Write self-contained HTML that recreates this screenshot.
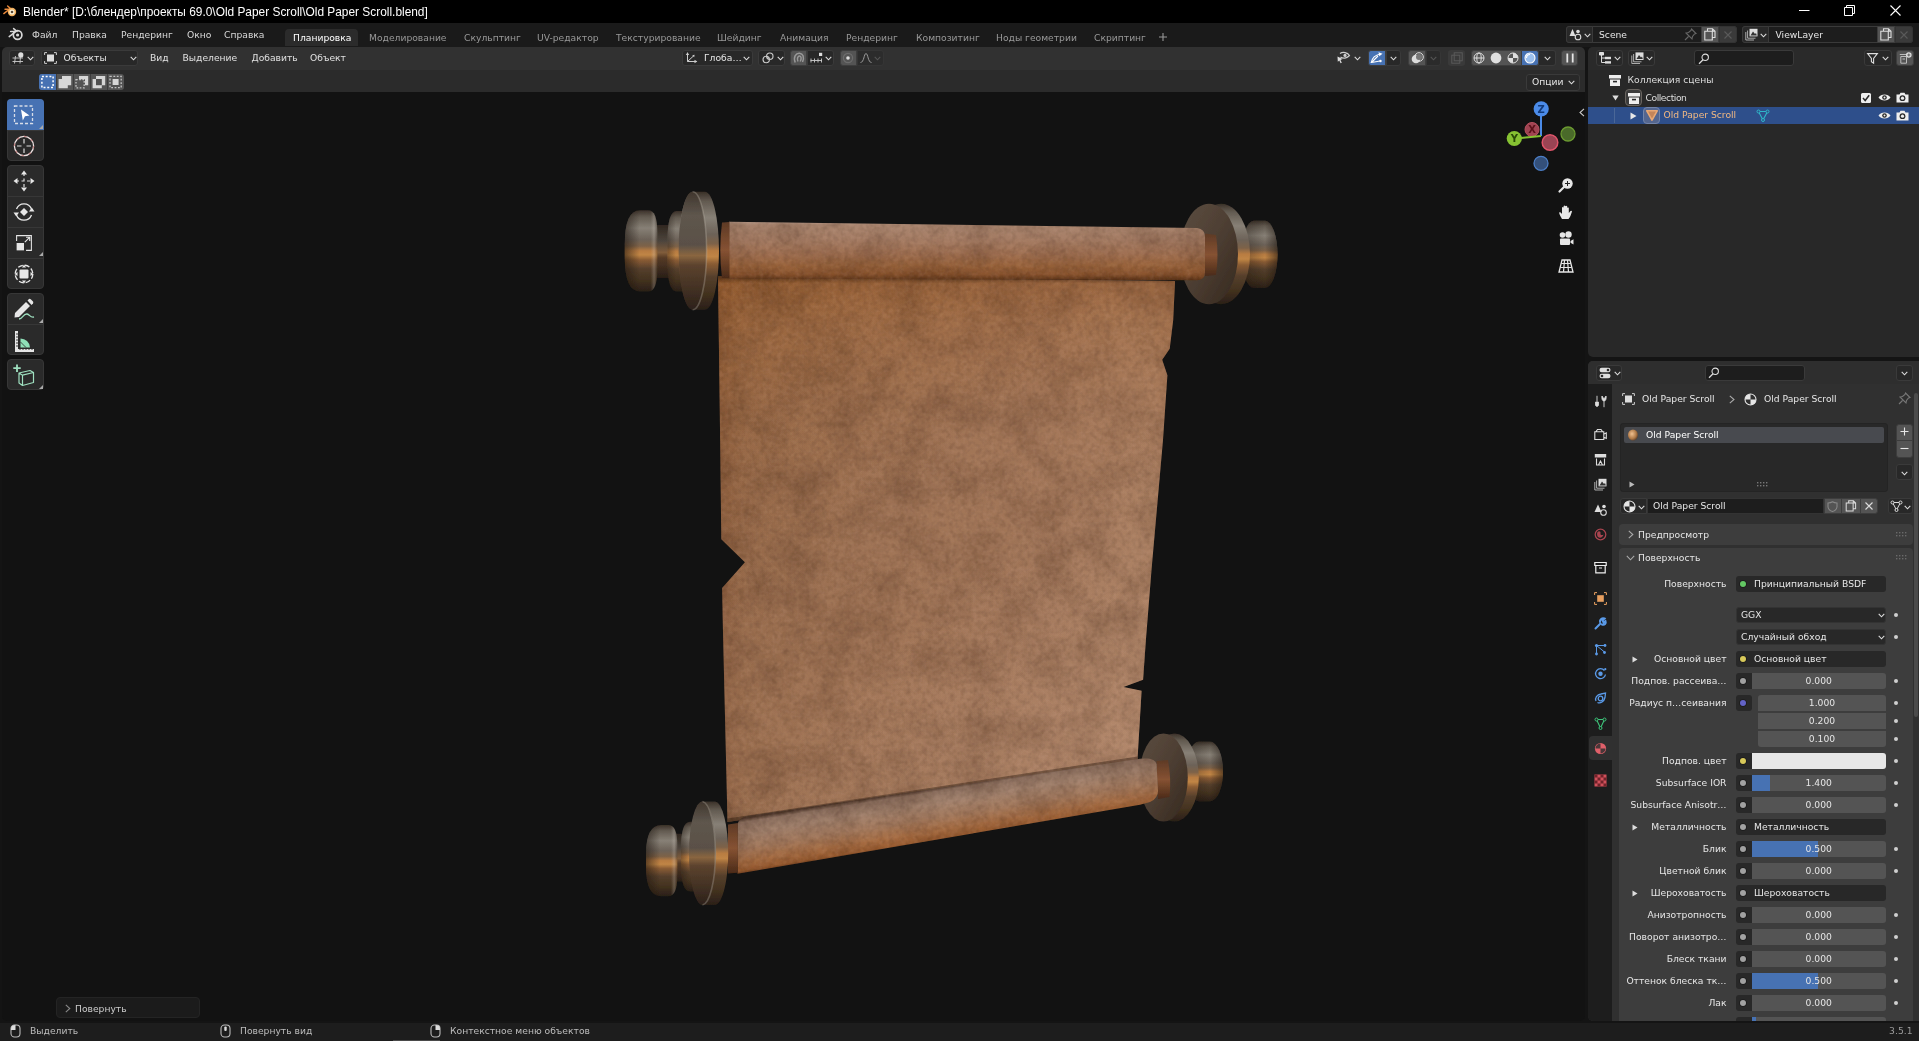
<!DOCTYPE html>
<html lang="ru">
<head>
<meta charset="utf-8">
<title>Blender</title>
<style>
html,body{margin:0;padding:0;width:1919px;height:1041px;overflow:hidden;background:#141414;}
body{font-family:"DejaVu Sans","Liberation Sans",sans-serif;font-size:9.2px;color:#e0e0e0;position:relative;line-height:1;}
.a{position:absolute;}
.t{position:absolute;white-space:nowrap;line-height:12px;height:12px;}
#titlebar,#topbar,#view3d,#outliner,#props,#status{will-change:transform;}
#titlebar{left:0;top:0;width:1919px;height:23px;background:#000;}
#titlebar .tt{left:23px;top:5px;font-family:"Liberation Sans","DejaVu Sans",sans-serif;font-size:11.9px;color:#fff;line-height:15px;height:15px;}
#topbar{left:0;top:23px;width:1919px;height:24px;background:#1a1a1a;}
#topbar .m{color:#d8d8d8;top:5.5px;}
#topbar .w{color:#989898;top:9px;}
#view3d{left:2px;top:47px;width:1583px;height:974px;background:#121212;border-radius:5px;overflow:hidden;}
#vhead{left:0;top:0;width:1583px;height:24px;background:#313131;}
#vtool{left:0;top:24px;width:1583px;height:22px;background:#2b2b2b;}
#outliner{left:1588px;top:47px;width:1331px;height:310px;background:#282828;border-radius:5px 0 0 5px;overflow:hidden;}
#props{left:1588px;top:361px;width:331px;height:660px;background:#303030;border-radius:5px 0 0 5px;overflow:hidden;}
#status{left:0;top:1023px;width:1919px;height:17.5px;background:#1d1d1d;}

.b{position:absolute;height:16px;box-sizing:border-box;border-radius:3px;}
.dk{background:#282828;border:1px solid #3a3a3a;}
.lt{background:#545454;border:1px solid #3d3d3d;}
.bl{background:#4772b3;border:1px solid #3d3d3d;}
.ch{position:absolute;width:6px;height:4px;}
svg{display:block;overflow:visible}
</style>
</head>
<body>
<div id="titlebar" class="a">
  <svg class="a" style="left:3px;top:5px" width="14" height="12" viewBox="0 0 14 12"><g fill="none" stroke="#e8883a" stroke-width="1.4" stroke-linecap="round" stroke-linejoin="round"><path d="M0.8 8.6L6.4 4.2M2 4.2H6.4M4.6 1L7.6 3.6"/></g><circle cx="9" cy="7" r="4.2" fill="#f0b060"/><circle cx="9" cy="7" r="2.6" fill="#fff5d8"/><circle cx="9" cy="7" r="1.3" fill="#5a4a3a"/></svg>
  <svg class="a" style="left:1799px;top:10px" width="11" height="2" viewBox="0 0 11 2"><path d="M0 0.5H10.5" stroke="#fff" stroke-width="1"/></svg>
  <svg class="a" style="left:1844px;top:5px" width="11" height="11" viewBox="0 0 11 11"><path d="M0.5 2.5H8.5V10.5H0.5ZM2.5 2.5V0.5H10.5V8.5H8.5" fill="none" stroke="#fff" stroke-width="1"/></svg>
  <svg class="a" style="left:1890px;top:5px" width="11" height="11" viewBox="0 0 11 11"><path d="M0.5 0.5L10.5 10.5M10.5 0.5L0.5 10.5" fill="none" stroke="#fff" stroke-width="1.1"/></svg>
  <div class="t tt">Blender* [D:\блендер\проекты 69.0\Old Paper Scroll\Old Paper Scroll.blend]</div>
</div>
<div id="topbar" class="a">
  <svg class="a" style="left:8px;top:4px" width="16" height="14" viewBox="0 0 16 14"><g fill="none" stroke="#d8d8d8" stroke-width="1.5" stroke-linecap="round" stroke-linejoin="round"><path d="M1.2 9.6 L7.6 4.6 M2.6 4.6 H7.6 M5.6 1.6 L9 4.4"/><circle cx="9.6" cy="8" r="4.3" stroke-width="1.7"/></g><circle cx="9.6" cy="8" r="1.6" fill="#d8d8d8"/></svg>
  <div class="t m" style="left:32px">Файл</div>
  <div class="t m" style="left:72px">Правка</div>
  <div class="t m" style="left:121px">Рендеринг</div>
  <div class="t m" style="left:187px">Окно</div>
  <div class="t m" style="left:224px">Справка</div>
  <div class="a" style="left:285px;top:6px;width:73px;height:17px;background:#2b2b2b;border-radius:4px 4px 0 0"></div>
  <div class="t w" style="left:293px;color:#fff">Планировка</div>
  <div class="t w" style="left:369px">Моделирование</div>
  <div class="t w" style="left:464px">Скульптинг</div>
  <div class="t w" style="left:537px">UV-редактор</div>
  <div class="t w" style="left:616px">Текстурирование</div>
  <div class="t w" style="left:717px">Шейдинг</div>
  <div class="t w" style="left:780px">Анимация</div>
  <div class="t w" style="left:846px">Рендеринг</div>
  <div class="t w" style="left:916px">Композитинг</div>
  <div class="t w" style="left:996px">Ноды геометрии</div>
  <div class="t w" style="left:1094px">Скриптинг</div>
  <svg class="a" style="left:1158px;top:9px" width="10" height="10" viewBox="0 0 10 10"><path d="M5 1V9M1 5H9" stroke="#989898" stroke-width="1.1" fill="none"/></svg>
  <div class="b dk" style="left:1566px;top:3px;width:171px;height:17px;background:#1d1d1d"></div>
  <div class="a" style="left:1566px;top:3px;width:27px;height:17px;background:#282828;border:1px solid #3a3a3a;box-sizing:border-box;border-radius:3px 0 0 3px"></div>
  <svg class="a" style="left:1569px;top:5px" width="13" height="13" viewBox="0 0 13 13"><path d="M3.5 1L6.5 8H0.5Z" fill="#ddd"/><circle cx="9" cy="3.5" r="1.8" fill="#ddd"/><circle cx="9" cy="9" r="2.8" fill="none" stroke="#ddd" stroke-width="1.1"/></svg>
  <svg class="a" style="left:1584px;top:10px" width="7" height="5" viewBox="0 0 7 5"><path d="M0.7 0.8L3.5 3.8L6.3 0.8" fill="none" stroke="#ddd" stroke-width="1.1"/></svg>
  <div class="t" style="left:1599px;top:5.5px;color:#e6e6e6">Scene</div>
  <svg class="a" style="left:1684px;top:5px" width="13" height="13" viewBox="0 0 13 13"><path d="M7.5 1L12 5.5L10.5 6L8.5 8.5L8 11L2 5L4.5 4.5L7 2.5ZM4.5 8.5L1 12" fill="none" stroke="#666" stroke-width="1.1"/></svg>
  <div class="a" style="left:1701px;top:3px;width:18px;height:17px;background:#545454;border:1px solid #3d3d3d;box-sizing:border-box"></div>
  <svg class="a" style="left:1704px;top:5px" width="12" height="13" viewBox="0 0 12 13"><path d="M3.5 3V0.8H8.5L11 3.3V9.5H8.5M8.5 0.8V3.3H11M0.8 3.2H8.3V12H0.8Z" fill="none" stroke="#ddd" stroke-width="1.1"/></svg>
  <div class="a" style="left:1719px;top:3px;width:18px;height:17px;background:#3a3a3a;border:1px solid #333;box-sizing:border-box;border-radius:0 3px 3px 0"></div>
  <svg class="a" style="left:1724px;top:8px" width="8" height="8" viewBox="0 0 8 8"><path d="M0.5 0.5L7.5 7.5M7.5 0.5L0.5 7.5" stroke="#5a5a5a" stroke-width="1.1"/></svg>
  <div class="b dk" style="left:1742px;top:3px;width:171px;height:17px;background:#1d1d1d"></div>
  <div class="a" style="left:1742px;top:3px;width:27px;height:17px;background:#282828;border:1px solid #3a3a3a;box-sizing:border-box;border-radius:3px 0 0 3px"></div>
  <svg class="a" style="left:1745px;top:5px" width="13" height="13" viewBox="0 0 13 13"><path d="M0.8 4V12H9M2.6 2.5V10.2H10.5" fill="none" stroke="#bbb" stroke-width="0.9"/><rect x="4.5" y="0.8" width="8" height="7.6" fill="#ddd"/><path d="M5.5 7.5L8 3.5L10 6L11 5L11.8 7.5Z" fill="#333"/></svg>
  <svg class="a" style="left:1760px;top:10px" width="7" height="5" viewBox="0 0 7 5"><path d="M0.7 0.8L3.5 3.8L6.3 0.8" fill="none" stroke="#ddd" stroke-width="1.1"/></svg>
  <div class="t" style="left:1775.5px;top:5.5px;color:#e6e6e6">ViewLayer</div>
  <div class="a" style="left:1877px;top:3px;width:18px;height:17px;background:#545454;border:1px solid #3d3d3d;box-sizing:border-box"></div>
  <svg class="a" style="left:1880px;top:5px" width="12" height="13" viewBox="0 0 12 13"><path d="M3.5 3V0.8H8.5L11 3.3V9.5H8.5M8.5 0.8V3.3H11M0.8 3.2H8.3V12H0.8Z" fill="none" stroke="#ddd" stroke-width="1.1"/></svg>
  <div class="a" style="left:1895px;top:3px;width:18px;height:17px;background:#3a3a3a;border:1px solid #333;box-sizing:border-box;border-radius:0 3px 3px 0"></div>
  <svg class="a" style="left:1900px;top:8px" width="8" height="8" viewBox="0 0 8 8"><path d="M0.5 0.5L7.5 7.5M7.5 0.5L0.5 7.5" stroke="#5a5a5a" stroke-width="1.1"/></svg>
</div>
<div id="view3d" class="a"><div class="a" style="left:0;top:-1px;width:1583px;height:976px">
<!--SCROLL-->
<svg class="a" style="left:-2px;top:-46px" width="1919" height="1041" viewBox="0 0 1919 1041">
<defs>
  <linearGradient id="gPaper" gradientUnits="userSpaceOnUse" x1="718" y1="0" x2="1175" y2="0">
    <stop offset="0" stop-color="#8a5d3f"/><stop offset="0.06" stop-color="#976b4c"/><stop offset="0.3" stop-color="#9e7254"/><stop offset="0.7" stop-color="#a3775a"/><stop offset="0.95" stop-color="#aa7e60"/><stop offset="1" stop-color="#a07457"/>
  </linearGradient>
  <linearGradient id="gPaperV" gradientUnits="userSpaceOnUse" x1="0" y1="277" x2="0" y2="830">
    <stop offset="0" stop-color="#2a1608" stop-opacity="0.75"/><stop offset="0.012" stop-color="#8a4a18" stop-opacity="0.4"/><stop offset="0.08" stop-color="#a05a20" stop-opacity="0.22"/><stop offset="0.25" stop-color="#a06030" stop-opacity="0.06"/><stop offset="0.5" stop-color="#b08060" stop-opacity="0"/><stop offset="0.8" stop-color="#c89878" stop-opacity="0.14"/><stop offset="0.95" stop-color="#c09070" stop-opacity="0.1"/><stop offset="1" stop-color="#302010" stop-opacity="0.3"/>
  </linearGradient>
  <linearGradient id="gPaperD" gradientUnits="userSpaceOnUse" x1="720" y1="280" x2="1150" y2="760">
    <stop offset="0" stop-color="#a05a18" stop-opacity="0.16"/><stop offset="0.45" stop-color="#a05a18" stop-opacity="0"/><stop offset="0.6" stop-color="#d8c0b4" stop-opacity="0"/><stop offset="1" stop-color="#d8c0b4" stop-opacity="0.12"/>
  </linearGradient>
  <linearGradient id="gRollT" gradientUnits="userSpaceOnUse" x1="0" y1="222" x2="0" y2="280">
    <stop offset="0" stop-color="#b89a88"/><stop offset="0.05" stop-color="#aa8670"/><stop offset="0.3" stop-color="#a57c64"/><stop offset="0.55" stop-color="#a07052"/><stop offset="0.75" stop-color="#9a643c"/><stop offset="0.9" stop-color="#8a542e"/><stop offset="1" stop-color="#5e351a"/>
  </linearGradient>
  <linearGradient id="gRollB" gradientUnits="userSpaceOnUse" x1="940" y1="787" x2="948.5" y2="840">
    <stop offset="0" stop-color="#4a3428"/><stop offset="0.07" stop-color="#8a6e5e"/><stop offset="0.28" stop-color="#a3836f"/><stop offset="0.55" stop-color="#a47a5e"/><stop offset="0.8" stop-color="#a66c42"/><stop offset="0.95" stop-color="#9a5c30"/><stop offset="1" stop-color="#7a4522"/>
  </linearGradient>
  <linearGradient id="gMetal" x1="0" y1="0" x2="0" y2="1">
    <stop offset="0" stop-color="#3a3028"/><stop offset="0.08" stop-color="#625a50"/><stop offset="0.22" stop-color="#878076"/><stop offset="0.36" stop-color="#6c6258"/><stop offset="0.44" stop-color="#7d6248"/><stop offset="0.5" stop-color="#b87c42"/><stop offset="0.55" stop-color="#c08545"/><stop offset="0.61" stop-color="#8a5c34"/><stop offset="0.72" stop-color="#553f2c"/><stop offset="0.86" stop-color="#43321f"/><stop offset="1" stop-color="#2a1f18"/>
  </linearGradient>
  <linearGradient id="gMetalD" x1="0" y1="0" x2="0" y2="1">
    <stop offset="0" stop-color="#30271f"/><stop offset="0.3" stop-color="#4c443c"/><stop offset="0.52" stop-color="#805c3a"/><stop offset="0.62" stop-color="#553a26"/><stop offset="1" stop-color="#281e17"/>
  </linearGradient>
  <linearGradient id="gFace" x1="0" y1="0" x2="1" y2="1">
    <stop offset="0" stop-color="#5a4c40"/><stop offset="0.45" stop-color="#4f4034"/><stop offset="1" stop-color="#35281f"/>
  </linearGradient>
  <linearGradient id="gWood" x1="0" y1="0" x2="0" y2="1">
    <stop offset="0" stop-color="#5e3a26"/><stop offset="0.5" stop-color="#865232"/><stop offset="1" stop-color="#4a2a18"/>
  </linearGradient>
  <linearGradient id="gEdgeL" x1="0" y1="0" x2="1" y2="0">
    <stop offset="0" stop-color="#1a120c" stop-opacity="0.55"/><stop offset="0.45" stop-color="#1a120c" stop-opacity="0"/><stop offset="0.8" stop-color="#d0c8c0" stop-opacity="0"/><stop offset="0.9" stop-color="#d0c8c0" stop-opacity="0.25"/><stop offset="1" stop-color="#1a120c" stop-opacity="0.3"/>
  </linearGradient>
  <linearGradient id="gEdgeR" x1="1" y1="0" x2="0" y2="0">
    <stop offset="0" stop-color="#1a120c" stop-opacity="0.55"/><stop offset="0.35" stop-color="#1a120c" stop-opacity="0"/><stop offset="1" stop-color="#1a120c" stop-opacity="0.4"/>
  </linearGradient>
  <linearGradient id="gFaceL" x1="0" y1="0" x2="0" y2="1">
    <stop offset="0" stop-color="#40362d"/><stop offset="0.2" stop-color="#5e564d"/><stop offset="0.45" stop-color="#5a5047"/><stop offset="0.54" stop-color="#8a6640"/><stop offset="0.62" stop-color="#5c432e"/><stop offset="1" stop-color="#2c211a"/>
  </linearGradient>
  <filter id="fNoise" x="0" y="0" width="100%" height="100%" color-interpolation-filters="sRGB">
    <feTurbulence type="fractalNoise" baseFrequency="0.028" numOctaves="3" seed="7" result="n1"/>
    <feColorMatrix in="n1" type="matrix" values="0 0 0 0 0.2  0 0 0 0 0.1  0 0 0 0 0.04  0.45 0 0 0 -0.17" result="m1"/>
    <feTurbulence type="fractalNoise" baseFrequency="0.22" numOctaves="2" seed="3" result="n2"/>
    <feColorMatrix in="n2" type="matrix" values="0 0 0 0 0.85  0 0 0 0 0.7  0 0 0 0 0.6  0 0.24 0 0 -0.095" result="m2"/>
    <feTurbulence type="fractalNoise" baseFrequency="0.18" numOctaves="2" seed="11" result="n3"/>
    <feColorMatrix in="n3" type="matrix" values="0 0 0 0 0.15  0 0 0 0 0.07  0 0 0 0 0.03  0 0 0.3 0 -0.12" result="m3"/>
    <feMerge result="mm"><feMergeNode in="m1"/><feMergeNode in="m2"/><feMergeNode in="m3"/></feMerge>
    <feComposite in="mm" in2="SourceGraphic" operator="in"/>
  </filter>
  <filter id="fBlur"><feGaussianBlur stdDeviation="0.7"/></filter>
  <clipPath id="cSheet"><path d="M718 276 L1175 281 L1173.2 320 L1169.7 348.8 L1162.2 359.7 L1167.4 375.3 L1163 440 L1151.5 570 L1145.9 640 L1143.1 679.7 L1123.5 687 L1141.6 690.7 L1137.5 759.5 L727.5 822 L722.7 620 L722.1 588.1 L744.9 562.2 L721.3 539.2 L720 430 Z"/></clipPath>
  <clipPath id="cAll"><path d="M718 276 L1175 281 L1173.2 320 L1169.7 348.8 L1162.2 359.7 L1167.4 375.3 L1163 440 L1151.5 570 L1145.9 640 L1143.1 679.7 L1123.5 687 L1141.6 690.7 L1137.5 759.5 L727.5 822 L722.7 620 L722.1 588.1 L744.9 562.2 L721.3 539.2 L720 430 Z M729 221.7 L1197 228.1 Q1205 229 1205 237 L1205 272 Q1205 280 1197 280.3 L729 278.5 Z M737.5 824 Q739 818 746 816.2 L1140 758.8 Q1155 757 1156.5 764 L1158 790 Q1158.5 798 1150 802 L1140 804.7 L737.5 873.7 Z"/></clipPath>
</defs>
<g filter="url(#fBlur)">
<!-- paper sheet -->
<path d="M718 276 L1175 281 L1173.2 320 L1169.7 348.8 L1162.2 359.7 L1167.4 375.3 L1163 440 L1151.5 570 L1145.9 640 L1143.1 679.7 L1123.5 687 L1141.6 690.7 L1137.5 759.5 L727.5 822 L722.7 620 L722.1 588.1 L744.9 562.2 L721.3 539.2 L720 430 Z" fill="url(#gPaper)"/>
<path d="M718 276 L1175 281 L1173.2 320 L1169.7 348.8 L1162.2 359.7 L1167.4 375.3 L1163 440 L1151.5 570 L1145.9 640 L1143.1 679.7 L1123.5 687 L1141.6 690.7 L1137.5 759.5 L727.5 822 L722.7 620 L722.1 588.1 L744.9 562.2 L721.3 539.2 L720 430 Z" fill="url(#gPaperV)"/>
<path d="M718 276 L1175 281 L1173.2 320 L1169.7 348.8 L1162.2 359.7 L1167.4 375.3 L1163 440 L1151.5 570 L1145.9 640 L1143.1 679.7 L1123.5 687 L1141.6 690.7 L1137.5 759.5 L727.5 822 L722.7 620 L722.1 588.1 L744.9 562.2 L721.3 539.2 L720 430 Z" fill="url(#gPaperD)"/>
<!-- shadow along bottom roll -->
<path d="M727.5 822 L1137.5 759.5 L1137.6 756.5 L727.4 818.5 Z" fill="#2a1a10" opacity="0.45"/>
<!-- TR knob -->
<ellipse cx="1243" cy="254.3" rx="9" ry="24" fill="url(#gMetalD)"/>
<path d="M1254 220.6 L1265 220.6 A12.5 33.7 0 0 1 1265 288.1 L1254 288.1 A12.5 33.7 0 0 1 1254 220.6 Z" fill="url(#gMetal)"/>
<path d="M1254 220.6 L1265 220.6 A12.5 33.7 0 0 1 1265 288.1 L1254 288.1 A12.5 33.7 0 0 1 1254 220.6 Z" fill="url(#gEdgeR)"/>
<ellipse cx="1221" cy="254" rx="29" ry="50.3" fill="url(#gMetal)"/>
<ellipse cx="1209" cy="254" rx="29" ry="50.3" fill="url(#gFace)"/>
<path d="M1205 233.5 L1216 235 Q1219 255 1216 275 L1205 276 Z" fill="url(#gWood)"/>
<!-- BR knob -->
<ellipse cx="1190" cy="772" rx="8" ry="21" fill="url(#gMetalD)"/>
<path d="M1199 741.6 L1210 741.6 A13 29.9 0 0 1 1210 801.4 L1199 801.4 A13 29.9 0 0 1 1199 741.6 Z" fill="url(#gMetal)"/>
<path d="M1199 741.6 L1210 741.6 A13 29.9 0 0 1 1210 801.4 L1199 801.4 A13 29.9 0 0 1 1199 741.6 Z" fill="url(#gEdgeR)"/>
<ellipse cx="1174.5" cy="777.5" rx="24.3" ry="44" fill="url(#gMetal)"/>
<ellipse cx="1163.5" cy="777.5" rx="24.3" ry="44" fill="url(#gFace)"/>
<path d="M1156.5 761 L1168 760 Q1171.5 779 1169.5 797 L1158 799 Z" fill="url(#gWood)"/>
<!-- top roll -->
<path id="rollT" d="M729 221.7 L1197 228.1 Q1205 229 1205 237 L1205 272 Q1205 280 1197 280.3 L729 278.5 Z" fill="url(#gRollT)"/>
<!-- bottom roll -->
<path id="rollB" d="M737.5 824 Q739 818 746 816.2 L1140 758.8 Q1155 757 1156.5 764 L1158 790 Q1158.5 798 1150 802 L1140 804.7 L737.5 873.7 Z" fill="url(#gRollB)"/>
<!-- noise over paper parts -->
<path d="M715 220 H1210 V285 H1180 V760 L1160 756 V805 L735 880 L735 830 H715 Z" fill="#000" filter="url(#fNoise)" clip-path="url(#cAll)"/>
<!-- TL knob -->
<path d="M729.5 222 L722 222.5 Q718.5 250 722 278 L729.5 278.5 Z" fill="url(#gWood)"/>
<rect x="655" y="225" width="16" height="53" fill="url(#gMetalD)"/>
<path d="M639.8 210.2 L648.3 210.2 Q657.3 210.2 657.3 232.2 L657.3 269.6 Q657.3 291.6 648.3 291.6 L639.8 291.6 Q624.8 291.6 624.8 257.6 L624.8 244.2 Q624.8 210.2 639.8 210.2 Z" fill="url(#gMetal)"/>
<path d="M639.8 210.2 L648.3 210.2 Q657.3 210.2 657.3 232.2 L657.3 269.6 Q657.3 291.6 648.3 291.6 L639.8 291.6 Q624.8 291.6 624.8 257.6 L624.8 244.2 Q624.8 210.2 639.8 210.2 Z" fill="url(#gEdgeL)"/>
<path d="M676.5 211 L682 211 Q686 211 686 231 L686 271.6 Q686 291.6 682 291.6 L676.5 291.6 Q667.5 291.6 667.5 261.6 L667.5 241 Q667.5 211 676.5 211 Z" fill="url(#gMetal)"/>
<path d="M676.5 211 L682 211 Q686 211 686 231 L686 271.6 Q686 291.6 682 291.6 L676.5 291.6 Q667.5 291.6 667.5 261.6 L667.5 241 Q667.5 211 676.5 211 Z" fill="url(#gEdgeL)" opacity="0.7"/>
<path d="M692.6 191.8 L705 191.8 A14 59 0 0 1 705 309.8 L692.6 309.8 A14 59 0 0 1 692.6 191.8 Z" fill="url(#gMetal)"/>
<ellipse cx="692.6" cy="250.8" rx="14" ry="59" fill="url(#gFaceL)"/>
<path d="M692.6 191.8 A14 59 0 0 1 692.6 309.8" fill="none" stroke="#c8c0b4" stroke-opacity="0.3" stroke-width="1.6"/>
<!-- BL knob -->
<path d="M728 824.5 L737.8 823 L737.8 872.8 L728 873.5 Z" fill="url(#gWood)"/>
<rect x="675" y="833.8" width="16" height="47.7" fill="url(#gMetalD)"/>
<path d="M661 825 L668.3 825 Q677.3 825 677.3 845 L677.3 876.3 Q677.3 896.3 668.3 896.3 L661 896.3 Q646 896.3 646 866.3 L646 855 Q646 825 661 825 Z" fill="url(#gMetal)"/>
<path d="M661 825 L668.3 825 Q677.3 825 677.3 845 L677.3 876.3 Q677.3 896.3 668.3 896.3 L661 896.3 Q646 896.3 646 866.3 L646 855 Q646 825 661 825 Z" fill="url(#gEdgeL)"/>
<path d="M690 821.7 L695 821.7 Q699 821.7 699 839.7 L699 873.6 Q699 891.6 695 891.6 L690 891.6 Q681 891.6 681 864.6 L681 848.7 Q681 821.7 690 821.7 Z" fill="url(#gMetal)"/>
<path d="M690 821.7 L695 821.7 Q699 821.7 699 839.7 L699 873.6 Q699 891.6 695 891.6 L690 891.6 Q681 891.6 681 864.6 L681 848.7 Q681 821.7 690 821.7 Z" fill="url(#gEdgeL)" opacity="0.7"/>
<path d="M702.5 801.5 L715.3 801.5 A13.5 51.8 0 0 1 715.3 905 L702.5 905 A13.5 51.8 0 0 1 702.5 801.5 Z" fill="url(#gMetal)"/>
<ellipse cx="702.5" cy="853.2" rx="13.5" ry="51.8" fill="url(#gFaceL)"/>
<path d="M702.5 801.5 A13.5 51.8 0 0 1 702.5 905" fill="none" stroke="#c8c0b4" stroke-opacity="0.3" stroke-width="1.6"/>
</g>
</svg>
<!--/SCROLL-->
<div class="a" style="left:4.5px;top:53px;width:37.5px;height:62px;background:#2a2a2a;border:1px solid #373737;box-sizing:border-box;border-radius:4px"></div>
<div class="a" style="left:4.5px;top:119px;width:37.5px;height:124px;background:#2a2a2a;border:1px solid #373737;box-sizing:border-box;border-radius:4px"></div>
<div class="a" style="left:4.5px;top:247px;width:37.5px;height:62px;background:#2a2a2a;border:1px solid #373737;box-sizing:border-box;border-radius:4px"></div>
<div class="a" style="left:4.5px;top:313px;width:37.5px;height:31px;background:#2a2a2a;border:1px solid #373737;box-sizing:border-box;border-radius:4px"></div>
<div class="a" style="left:4.5px;top:53px;width:37.5px;height:31px;background:#4772b3;border-radius:4px 4px 0 0"></div>
<div class="a" style="left:5.5px;top:84px;width:35.5px;height:1px;background:#373737"></div>
<div class="a" style="left:5.5px;top:150px;width:35.5px;height:1px;background:#373737"></div>
<div class="a" style="left:5.5px;top:181px;width:35.5px;height:1px;background:#373737"></div>
<div class="a" style="left:5.5px;top:212px;width:35.5px;height:1px;background:#373737"></div>
<div class="a" style="left:5.5px;top:278px;width:35.5px;height:1px;background:#373737"></div>
<svg class="a" style="left:36.5px;top:78.5px" width="4" height="4" viewBox="0 0 4 4"><path d="M4 0V4H0Z" fill="#aaa"/></svg>
<svg class="a" style="left:36.5px;top:205.5px" width="4" height="4" viewBox="0 0 4 4"><path d="M4 0V4H0Z" fill="#aaa"/></svg>
<svg class="a" style="left:36.5px;top:272.5px" width="4" height="4" viewBox="0 0 4 4"><path d="M4 0V4H0Z" fill="#aaa"/></svg>
<svg class="a" style="left:36.5px;top:338.5px" width="4" height="4" viewBox="0 0 4 4"><path d="M4 0V4H0Z" fill="#aaa"/></svg>
<svg class="a" style="left:10.3px;top:56.5px" width="24" height="24" viewBox="0 0 24 24"><rect x="2.5" y="3" width="18" height="17.5" fill="none" stroke="#d8dde8" stroke-width="1.3" stroke-dasharray="3 2"/><path d="M9 6.5L17.5 12.5L13 13.2L10.8 17.5Z" fill="#fff"/></svg>
<svg class="a" style="left:10.3px;top:87.5px" width="24" height="24" viewBox="0 0 24 24"><circle cx="12" cy="12" r="9.6" fill="none" stroke="#eadfdf" stroke-width="1.3"/><circle cx="12" cy="12" r="9.6" fill="none" stroke="#b04a4a" stroke-width="1.3" stroke-dasharray="2.5 5" opacity="0.55"/><path d="M12 5V9.5M12 14.5V19M5 12H9.5M14.5 12H19" stroke="#ddd" stroke-width="1.2"/></svg>
<svg class="a" style="left:10.3px;top:122.5px" width="24" height="24" viewBox="0 0 24 24"><path d="M12 4V20M4 12H20" stroke="#ddd" stroke-width="1.2" stroke-dasharray="3 2.5" /><path d="M12 1.5L15 5.5H9ZM12 22.5L15 18.5H9ZM1.5 12L5.5 9V15ZM22.5 12L18.5 9V15Z" fill="#e6e6e6"/></svg>
<svg class="a" style="left:10.3px;top:153.5px" width="24" height="24" viewBox="0 0 24 24"><path d="M4.5 9A8 8 0 0 1 19.5 9M19.5 15A8 8 0 0 1 4.5 15" fill="none" stroke="#e6e6e6" stroke-width="1.3"/><path d="M12 8L16 12L12 16L8 12Z" fill="#e6e6e6"/><path d="M1.5 12.5H7L4.2 16.5ZM17 11.5H22.5L19.8 7.5Z" fill="#e6e6e6"/></svg>
<svg class="a" style="left:10.3px;top:184.5px" width="24" height="24" viewBox="0 0 24 24"><g transform="translate(12 12) scale(0.82) translate(-12 -12)"><rect x="3" y="12" width="9" height="9" fill="#e6e6e6"/><path d="M3 9.5V3H21V21H14.5" fill="none" stroke="#e6e6e6" stroke-width="1.3"/><path d="M13 11L18.5 5.5M14.5 5H19V9.5" fill="none" stroke="#e6e6e6" stroke-width="1.4"/></g></svg>
<svg class="a" style="left:10.3px;top:215.5px" width="24" height="24" viewBox="0 0 24 24"><circle cx="12" cy="12" r="8.8" fill="none" stroke="#e6e6e6" stroke-width="1.3" stroke-dasharray="5 2"/><rect x="7.5" y="7.5" width="9" height="9" rx="1" fill="#e6e6e6"/><path d="M12 2.5L14 5.5H10ZM12 21.5L14 18.5H10ZM2.5 12L5.5 10V14ZM21.5 12L18.5 10V14Z" fill="#e6e6e6"/></svg>
<svg class="a" style="left:10.3px;top:250.5px" width="24" height="24" viewBox="0 0 24 24"><path d="M3 16L14 5L18 9L7 20L2.5 20.5Z" fill="#e6e6e6"/><path d="M15.5 3.5L17 2Q18 1.5 19 2.5L21 4.5Q21.5 5.5 21 6.5L19.5 8Z" fill="#e6e6e6"/><path d="M7 22C11 22 11 16.5 15 17C18 17.5 18 21 22 20" fill="none" stroke="#9fe0c0" stroke-width="1.3"/></svg>
<svg class="a" style="left:10.3px;top:282.5px" width="24" height="24" viewBox="0 0 24 24"><path d="M4.5 2V21.5H22" fill="none" stroke="#e6e6e6" stroke-width="3"/><path d="M4 5H6M4 8H6M4 11H6M4 14H6M4 17H6M8 21V19.5M11 21V19.5M14 21V19.5M17 21V19.5M20 21V19.5" stroke="#2a2a2a" stroke-width="0.9"/><path d="M8.5 18.5V9.5A9.5 9.5 0 0 1 18 18.5Z" fill="#8fe0b8"/><path d="M8.5 13L14 18.5" stroke="#2a2a2a" stroke-width="0.8"/></svg>
<svg class="a" style="left:10.3px;top:316.5px" width="24" height="24" viewBox="0 0 24 24"><path d="M7 10L18 7.5L21.5 9.5V19.5L10.5 22.5L7 20ZM7 10L10.5 12.2V22.5M10.5 12.2L21.5 9.5" fill="none" stroke="#9fe0c0" stroke-width="1.2" stroke-linejoin="round"/><path d="M5 1.5V9M1.3 5.2H8.7" stroke="#9fe0c0" stroke-width="1.8"/></svg>
<svg class="a" style="left:1498px;top:50px" width="84" height="80" viewBox="1500 96 84 80">
<circle cx="1568" cy="134" r="7" fill="#4a6a2a" stroke="#6b9a30" stroke-width="1.3"/>
<circle cx="1541" cy="163.3" r="7" fill="#34507a" stroke="#4b7dc5" stroke-width="1.3"/>
<circle cx="1532" cy="129.5" r="7" fill="#a04452" stroke="#b8505e" stroke-width="1"/>
<text x="1532" y="133.3" font-size="10" font-weight="bold" text-anchor="middle" fill="#5a1018" font-family="DejaVu Sans, Liberation Sans, sans-serif">X</text>
<path d="M1541 136V115" stroke="#4b8be8" stroke-width="2"/>
<path d="M1541 136L1521 138" stroke="#86c232" stroke-width="2"/>
<circle cx="1541.2" cy="108.8" r="7.6" fill="#4b8be8"/>
<text x="1541.2" y="112.6" font-size="10" font-weight="bold" text-anchor="middle" fill="#123a7a" font-family="DejaVu Sans, Liberation Sans, sans-serif">Z</text>
<circle cx="1514.3" cy="138.5" r="7.6" fill="#86c232"/>
<text x="1514.3" y="142.3" font-size="10" font-weight="bold" text-anchor="middle" fill="#2a4a08" font-family="DejaVu Sans, Liberation Sans, sans-serif">Y</text>
<circle cx="1550" cy="142.5" r="7.8" fill="#9a4454" stroke="#e0546a" stroke-width="1.5"/>
</svg>
<svg class="a" style="left:1576.5px;top:62px" width="6" height="9" viewBox="0 0 6 9"><path d="M5 0.8L1 4.5L5 8.2" fill="none" stroke="#ccc" stroke-width="1.1"/></svg>
<svg class="a" style="left:1555.7px;top:131px" width="16" height="16" viewBox="0 0 16 16"><circle cx="9.5" cy="6.5" r="5.2" fill="#e6e6e6"/><path d="M6 10L1.5 14.5" stroke="#e6e6e6" stroke-width="2.2" stroke-linecap="round"/><path d="M9.5 4V9M7 6.5H12" stroke="#222" stroke-width="1"/></svg>
<svg class="a" style="left:1555.7px;top:158px" width="16" height="16" viewBox="0 0 16 16"><path d="M4 15C2.5 12 1 10 1.2 8.5C2 8 3 8.8 4 10V3.5Q4.8 2.5 5.6 3.5V7.5V2Q6.5 1 7.4 2V7.5V2.3Q8.3 1.3 9.2 2.3V7.8V3.8Q10 3 10.8 3.8V9L12.5 7Q13.8 6.5 14 7.5C13 10 12.5 13 10.5 15Z" fill="#e6e6e6"/></svg>
<svg class="a" style="left:1555.7px;top:184.5px" width="16" height="16" viewBox="0 0 16 16"><circle cx="4.5" cy="4" r="2.8" fill="#e6e6e6"/><circle cx="10.5" cy="3.5" r="3.2" fill="#e6e6e6"/><rect x="2" y="7.5" width="10" height="6.5" rx="1" fill="#e6e6e6"/><path d="M12.5 10L15.5 8.2V13.5L12.5 11.8Z" fill="#e6e6e6"/></svg>
<svg class="a" style="left:1555.7px;top:211.5px" width="16" height="16" viewBox="0 0 16 16"><path d="M4 2H12L15 14H1Z" fill="none" stroke="#e6e6e6" stroke-width="1.3"/><path d="M6.5 2L5.5 14M9.5 2L10.5 14M3.2 5.5H12.8M2.3 9.5H13.7" stroke="#e6e6e6" stroke-width="1.2"/></svg>
<div class="a" style="left:54px;top:951px;width:144px;height:21px;background:#1b1b1b;border:1px solid #242424;box-sizing:border-box;border-radius:4px"></div>
<svg class="a" style="left:63px;top:958px" width="6" height="9" viewBox="0 0 6 9"><path d="M0.8 0.8L4.8 4.5L0.8 8.2" fill="none" stroke="#888" stroke-width="1.1"/></svg>
<div class="t" style="left:73px;top:956.5px;color:#ccc">Повернуть</div>
  <div id="vhead" class="a">
  <div class="b dk" style="left:6.5px;top:4px;width:26px"></div>
  <svg class="a" style="left:10px;top:6px" width="13" height="12" viewBox="0 0 13 12"><g fill="none" stroke="#ccc" stroke-width="0.9"><path d="M0.5 6H11M0.5 9.5H11M3.5 4L2.5 11.5M8.5 4L8 11.5"/></g><circle cx="8.8" cy="2.9" r="2.6" fill="#ddd"/></svg>
  <svg class="a" style="left:24.5px;top:9.8px" width="7" height="5" viewBox="0 0 7 5"><path d="M0.7 0.8L3.5 3.8L6.3 0.8" fill="none" stroke="#ddd" stroke-width="1.1"/></svg>
  <div class="b dk" style="left:39px;top:4px;width:97px"></div>
  <svg class="a" style="left:42px;top:6px" width="13" height="12" viewBox="0 0 13 12"><rect x="3" y="2.5" width="7" height="7" fill="#ddd"/><path d="M0.6 3V0.6H3M10 0.6H12.4V3M12.4 9V11.4H10M3 11.4H0.6V9" fill="none" stroke="#ccc" stroke-width="1"/></svg>
  <div class="t" style="left:61.5px;top:6px;color:#e6e6e6">Объекты</div>
  <svg class="a" style="left:127.5px;top:9.8px" width="7" height="5" viewBox="0 0 7 5"><path d="M0.7 0.8L3.5 3.8L6.3 0.8" fill="none" stroke="#ddd" stroke-width="1.1"/></svg>
  <div class="t" style="left:148px;top:6px">Вид</div>
  <div class="t" style="left:180.5px;top:6px">Выделение</div>
  <div class="t" style="left:249.5px;top:6px">Добавить</div>
  <div class="t" style="left:308px;top:6px">Объект</div>

  <div class="b dk" style="left:679.5px;top:4px;width:71px"></div>
  <svg class="a" style="left:683px;top:6px" width="13" height="12" viewBox="0 0 13 12"><path d="M2.5 0.8V9.5H11.5M2.5 9.5L9 3.5" fill="none" stroke="#ccc" stroke-width="1"/><path d="M0.8 3L2.5 0.3L4.2 3ZM9.5 7.8L12.3 9.5L9.5 11.2ZM7.2 3.2L9.6 2.8L9.2 5.2Z" fill="#ccc"/></svg>
  <div class="t" style="left:702px;top:6px;color:#e6e6e6">Глоба…</div>
  <svg class="a" style="left:741px;top:9.8px" width="7" height="5" viewBox="0 0 7 5"><path d="M0.7 0.8L3.5 3.8L6.3 0.8" fill="none" stroke="#ddd" stroke-width="1.1"/></svg>
  <div class="b dk" style="left:756px;top:4px;width:27px"></div>
  <svg class="a" style="left:760px;top:6px" width="12" height="12" viewBox="0 0 12 12"><g fill="none" stroke="#ccc" stroke-width="1.1"><circle cx="4.2" cy="7.5" r="3.2"/><circle cx="7.8" cy="4.2" r="3.2"/></g><circle cx="6" cy="6" r="0.9" fill="#ccc"/></svg>
  <svg class="a" style="left:774.5px;top:9.8px" width="7" height="5" viewBox="0 0 7 5"><path d="M0.7 0.8L3.5 3.8L6.3 0.8" fill="none" stroke="#ddd" stroke-width="1.1"/></svg>
  <div class="b lt" style="left:788px;top:4px;width:17px;border-radius:3px 0 0 3px"></div>
  <svg class="a" style="left:790.5px;top:6px" width="12" height="12" viewBox="0 0 12 12"><path d="M2.2 10.5C0 5 3 1 6.5 1.2C10 1.5 11.5 5 9.5 10M5 9.5C3.6 6.5 5 4 6.6 4.1C8.4 4.3 8.6 7 7.2 9.5" fill="none" stroke="#999" stroke-width="1.5"/></svg>
  <div class="b dk" style="left:805px;top:4px;width:27px;border-radius:0 3px 3px 0"></div>
  <svg class="a" style="left:807.5px;top:6px" width="13" height="12" viewBox="0 0 13 12"><path d="M0.5 8.5H12M1 6.5V10.5M4.5 6.5V10.5M8 6.5V10.5M11.5 6.5V10.5" fill="none" stroke="#ccc" stroke-width="0.9"/><rect x="9" y="0.8" width="3.2" height="3.2" fill="#ddd"/></svg>
  <svg class="a" style="left:823px;top:9.8px" width="7" height="5" viewBox="0 0 7 5"><path d="M0.7 0.8L3.5 3.8L6.3 0.8" fill="none" stroke="#ddd" stroke-width="1.1"/></svg>
  <div class="b lt" style="left:837.5px;top:4px;width:17px;border-radius:3px 0 0 3px"></div>
  <svg class="a" style="left:840px;top:6px" width="12" height="12" viewBox="0 0 12 12"><circle cx="6" cy="6" r="4.6" fill="none" stroke="#6c6c6c" stroke-width="1.2"/><circle cx="6" cy="6" r="1.8" fill="#ddd"/></svg>
  <div class="b dk" style="left:854.5px;top:4px;width:27px;border-radius:0 3px 3px 0;opacity:.55"></div>
  <svg class="a" style="left:858px;top:6px" width="12" height="12" viewBox="0 0 12 12"><path d="M0.5 10.5C4 10.5 4 1.5 6 1.5C8 1.5 8 10.5 11.5 10.5" fill="none" stroke="#999" stroke-width="1"/></svg>
  <svg class="a" style="left:872px;top:9.8px" width="7" height="5" viewBox="0 0 7 5"><path d="M0.7 0.8L3.5 3.8L6.3 0.8" fill="none" stroke="#555" stroke-width="1.1"/></svg>

  <svg class="a" style="left:1335px;top:6px" width="14" height="12" viewBox="0 0 14 12"><path d="M3 1.5C6 -0.5 10.5 0.5 12.5 3.5C10 6.5 6 6.8 3.5 5" fill="none" stroke="#ccc" stroke-width="1.2"/><circle cx="8" cy="3.4" r="1.6" fill="#ccc"/><path d="M0.5 4.5L5.5 7L3.5 8L4.8 10.8L3.6 11.3L2.3 8.6L0.8 9.8Z" fill="#ddd"/></svg>
  <svg class="a" style="left:1351.5px;top:9.8px" width="7" height="5" viewBox="0 0 7 5"><path d="M0.7 0.8L3.5 3.8L6.3 0.8" fill="none" stroke="#ddd" stroke-width="1.1"/></svg>
  <div class="b bl" style="left:1365.5px;top:4px;width:18px;border-radius:3px 0 0 3px"></div>
  <svg class="a" style="left:1368px;top:6px" width="13" height="12" viewBox="0 0 13 12"><path d="M1 11C2 6 5 3 10.5 2M1.5 10.5L10 9M1.5 10.5L8 4" fill="none" stroke="#fff" stroke-width="1.1"/><path d="M8.5 0.3L12.5 1.8L9.3 4.2Z" fill="#fff"/><circle cx="10.5" cy="9" r="1.2" fill="#fff"/></svg>
  <div class="b dk" style="left:1383.5px;top:4px;width:15px;border-radius:0 3px 3px 0"></div>
  <svg class="a" style="left:1387.5px;top:9.8px" width="7" height="5" viewBox="0 0 7 5"><path d="M0.7 0.8L3.5 3.8L6.3 0.8" fill="none" stroke="#ddd" stroke-width="1.1"/></svg>
  <div class="b lt" style="left:1406px;top:4px;width:18px;border-radius:3px 0 0 3px"></div>
  <svg class="a" style="left:1409px;top:6px" width="13" height="12" viewBox="0 0 13 12"><circle cx="5" cy="7" r="4.3" fill="#ddd"/><circle cx="8" cy="5" r="4.3" fill="none" stroke="#ddd" stroke-width="1"/><circle cx="8" cy="5" r="3" fill="#777"/></svg>
  <div class="b dk" style="left:1424px;top:4px;width:15px;border-radius:0 3px 3px 0;opacity:.6"></div>
  <svg class="a" style="left:1428px;top:9.8px" width="7" height="5" viewBox="0 0 7 5"><path d="M0.7 0.8L3.5 3.8L6.3 0.8" fill="none" stroke="#555" stroke-width="1.1"/></svg>
  <div class="b" style="left:1446px;top:4px;width:17px;background:#3a3a3a"></div>
  <svg class="a" style="left:1449px;top:6px" width="12" height="12" viewBox="0 0 12 12"><g fill="none" stroke="#5a5a5a" stroke-width="1"><rect x="0.8" y="3.2" width="8" height="8"/><rect x="3.2" y="0.8" width="8" height="8"/></g></svg>
  <div class="b lt" style="left:1468.5px;top:4px;width:68px"></div>
  <div class="b bl" style="left:1519px;top:4px;width:17.5px;border-radius:0 3px 3px 0"></div>
  <svg class="a" style="left:1471px;top:6px" width="64" height="12" viewBox="0 0 64 12"><g fill="none" stroke="#ddd" stroke-width="1"><circle cx="6" cy="6" r="5"/><ellipse cx="6" cy="6" rx="2.2" ry="5"/><path d="M1 6H11"/></g><circle cx="23" cy="6" r="5.4" fill="#e0e0e0"/><circle cx="40" cy="6" r="5" fill="none" stroke="#ddd" stroke-width="1"/><path d="M40 1A5 5 0 0 1 45 6H40ZM40 6V11A5 5 0 0 1 35 6Z" fill="#ddd"/><circle cx="57" cy="6" r="5" fill="#9cc0ee" stroke="#fff" stroke-width="1.1"/><path d="M53.5 6A3.5 3.5 0 0 1 57 2.5" stroke="#fff" fill="none" stroke-width="1.2"/></svg>
  <div class="b dk" style="left:1537px;top:4px;width:17px;border-radius:0 3px 3px 0;border-left:0"></div>
  <svg class="a" style="left:1541.5px;top:9.8px" width="7" height="5" viewBox="0 0 7 5"><path d="M0.7 0.8L3.5 3.8L6.3 0.8" fill="none" stroke="#ddd" stroke-width="1.1"/></svg>
  <div class="b lt" style="left:1559px;top:4px;width:17px"></div>
  <svg class="a" style="left:1562.5px;top:7px" width="10" height="10" viewBox="0 0 10 10"><path d="M2.3 0.5V9.5M7.7 0.5V9.5" stroke="#e6e6e6" stroke-width="1.8"/></svg>
</div>
  <div id="vtool" class="a">
  <div class="a" style="left:37px;top:4px;width:84.5px;height:16px;background:#545454;border-radius:3px"></div>
  <div class="a" style="left:37px;top:4px;width:17px;height:16px;background:#4772b3;border-radius:3px 0 0 3px"></div>
  <svg class="a" style="left:37px;top:4px" width="85" height="16" viewBox="0 0 85 16"><rect x="2.9" y="2.4" width="11.2" height="11.2" fill="none" stroke="#fff" stroke-width="1.5" stroke-dasharray="2 1.75"/><path d="M17.5 0V16M34.5 0V16M51.5 0V16M68.5 0V16" stroke="#3d3d3d" stroke-width="1"/><path d="M23 2H32.2V11.2H28.8V14.2H19.6V5H23Z" fill="#d6d6d6"/><rect x="37" y="5.6" width="8.2" height="8.2" fill="none" stroke="#c4c4c4" stroke-width="1.3" stroke-dasharray="1.7 1.5"/><path d="M40 2H49.2V11.2H46V5.2H40Z" fill="#d6d6d6"/><path d="M57 2H66.2V11.2H62.8V14.2H53.6V5H57Z" fill="#d6d6d6"/><rect x="57" y="5" width="5.8" height="6.2" fill="#4e4e4e"/><rect x="71" y="2.4" width="11.2" height="11.2" fill="none" stroke="#c4c4c4" stroke-width="1.3" stroke-dasharray="1.8 1.6"/><rect x="73.6" y="5" width="6" height="6" fill="#d6d6d6"/></svg>
  <div class="b dk" style="left:1524px;top:3.5px;width:53.5px;height:17px"></div>
  <div class="t" style="left:1530px;top:6px;color:#e6e6e6">Опции</div>
  <svg class="a" style="left:1566px;top:9.8px" width="7" height="5" viewBox="0 0 7 5"><path d="M0.7 0.8L3.5 3.8L6.3 0.8" fill="none" stroke="#ddd" stroke-width="1.1"/></svg>
</div>
</div></div>
<div id="outliner" class="a" style="width:331px"><div class="a" style="left:0;top:-1px;width:331px;height:312px">
  <div class="a" style="left:0;top:0;width:331px;height:24px;background:#2a2a2a"></div>
  <div class="b dk" style="left:8px;top:4px;width:27px"></div>
  <svg class="a" style="left:11px;top:6px" width="13" height="12" viewBox="0 0 13 12"><path d="M0.5 0.5H4.5V3H0.5ZM2.5 3V10.5H6M2.5 6H6" fill="none" stroke="#ddd" stroke-width="1"/><rect x="0.5" y="0.5" width="4" height="2.5" fill="#ddd"/><rect x="6" y="4.8" width="6" height="2.4" fill="#ddd"/><rect x="6" y="9.2" width="6" height="2.4" fill="#ddd"/></svg>
  <svg class="a" style="left:26px;top:9.8px" width="7" height="5" viewBox="0 0 7 5"><path d="M0.7 0.8L3.5 3.8L6.3 0.8" fill="none" stroke="#ddd" stroke-width="1.1"/></svg>
  <div class="b dk" style="left:40px;top:4px;width:27px"></div>
  <svg class="a" style="left:43px;top:6px" width="13" height="12" viewBox="0 0 13 12"><path d="M0.8 3.5V11.5H9M2.6 2V9.8H10.5" fill="none" stroke="#bbb" stroke-width="0.9"/><rect x="4.5" y="0.4" width="8" height="7.6" fill="#ddd"/><path d="M5.5 7L8 3L10 5.5L11 4.5L11.8 7Z" fill="#333"/></svg>
  <svg class="a" style="left:58px;top:9.8px" width="7" height="5" viewBox="0 0 7 5"><path d="M0.7 0.8L3.5 3.8L6.3 0.8" fill="none" stroke="#ddd" stroke-width="1.1"/></svg>
  <div class="b" style="left:105.5px;top:4px;width:100.5px;background:#1d1d1d;border:1px solid #3a3a3a"></div>
  <svg class="a" style="left:110px;top:6.5px" width="12" height="12" viewBox="0 0 12 12"><circle cx="7.2" cy="4.3" r="3.2" fill="none" stroke="#ddd" stroke-width="1.1"/><path d="M5 6.7L1 10.8" stroke="#ddd" stroke-width="1.3"/></svg>
  <div class="b dk" style="left:275.5px;top:4px;width:28px"></div>
  <svg class="a" style="left:279px;top:6.5px" width="11" height="11" viewBox="0 0 11 11"><path d="M0.6 0.6H10.4L6.6 5.5V10.2L4.4 8.8V5.5Z" fill="none" stroke="#ddd" stroke-width="1.1"/></svg>
  <svg class="a" style="left:294px;top:9.8px" width="7" height="5" viewBox="0 0 7 5"><path d="M0.7 0.8L3.5 3.8L6.3 0.8" fill="none" stroke="#ddd" stroke-width="1.1"/></svg>
  <div class="b lt" style="left:308px;top:4px;width:17.5px"></div>
  <svg class="a" style="left:310.5px;top:6px" width="13" height="12" viewBox="0 0 13 12"><path d="M0.8 2.5H8M1.8 4.5H7.5V11.2H1.8ZM3.5 7H6" fill="none" stroke="#bbb" stroke-width="1"/><circle cx="9.8" cy="3" r="2.8" fill="#ddd"/><path d="M9.8 1.5V4.5M8.3 3H11.3" stroke="#545454" stroke-width="0.9"/></svg>

  <svg class="a" style="left:21px;top:28.5px" width="12" height="11" viewBox="0 0 12 11"><path d="M0 0H12V3.5H0ZM1 4.5H11V11H1Z" fill="#eee"/><rect x="4" y="5.8" width="4" height="1.6" fill="#282828"/></svg>
  <div class="t" style="left:39.5px;top:28px;color:#ddd">Коллекция сцены</div>
  <svg class="a" style="left:24px;top:49px" width="7" height="6" viewBox="0 0 7 6"><path d="M0.3 0.5H6.7L3.5 5.5Z" fill="#ddd"/></svg>
  <div class="a" style="left:37px;top:43px;width:17px;height:17px;border-radius:4px;background:#3b3b3b;border:1px solid #6a6560;box-sizing:border-box"></div>
  <svg class="a" style="left:39.5px;top:46.5px" width="12" height="11" viewBox="0 0 12 11"><path d="M0 0H12V3.5H0ZM1 4.5H11V11H1Z" fill="#eee"/><rect x="4" y="5.8" width="4" height="1.6" fill="#282828"/></svg>
  <div class="t" style="left:57.5px;top:45.5px;color:#ddd;letter-spacing:-0.45px">Collection</div>
  <svg class="a" style="left:273px;top:46.5px" width="10" height="10" viewBox="0 0 10 10"><rect x="0" y="0" width="10" height="10" rx="1.5" fill="#eee"/><path d="M2 5L4.2 7.5L8.2 2.3" fill="none" stroke="#282828" stroke-width="1.5"/></svg>
  <svg class="a" style="left:290px;top:47px" width="13" height="9" viewBox="0 0 13 9"><path d="M0.5 4.5C3 0.5 10 0.5 12.5 4.5C10 8.5 3 8.5 0.5 4.5Z" fill="#eee"/><circle cx="6.5" cy="4.5" r="2.3" fill="#282828"/><circle cx="6.5" cy="4.5" r="1" fill="#eee"/></svg>
  <svg class="a" style="left:308px;top:46px" width="13" height="11" viewBox="0 0 13 11"><path d="M0.5 2.5H3.5L4.5 0.8H8.5L9.5 2.5H12.5V10.5H0.5Z" fill="#eee"/><circle cx="6.5" cy="6.2" r="2.9" fill="#282828"/><circle cx="6.5" cy="6.2" r="1.6" fill="#eee"/></svg>
  <div class="a" style="left:0;top:60.5px;width:331px;height:17.5px;background:#2e4f8b"></div>
  <div class="a" style="left:26px;top:62px;width:1px;height:15px;background:#4a6797"></div>
  <svg class="a" style="left:42px;top:65.5px" width="7" height="8" viewBox="0 0 7 8"><path d="M0.5 0.6L6.5 4L0.5 7.4Z" fill="#e8e8e8"/></svg>
  <div class="a" style="left:54.5px;top:60.5px;width:17.5px;height:17.5px;border-radius:4px;background:#54668f;border:1px solid #7385aa;box-sizing:border-box"></div>
  <svg class="a" style="left:57.5px;top:64px" width="12" height="11" viewBox="0 0 12 11"><path d="M0.8 0.8H11.2L6 10.2Z" fill="#c4855a" stroke="#e8a874" stroke-width="1.6" stroke-linejoin="round"/></svg>
  <div class="t" style="left:75.5px;top:63px;color:#f0b882">Old Paper Scroll</div>
  <svg class="a" style="left:167.5px;top:62.5px" width="14" height="13" viewBox="0 0 14 13"><path d="M2.5 2.5H11.5L7 11Z" fill="none" stroke="#2fb6c9" stroke-width="1.1"/><g fill="#2e4f8b" stroke="#2fb6c9" stroke-width="1"><circle cx="2.5" cy="2.5" r="1.5"/><circle cx="11.5" cy="2.5" r="1.5"/><circle cx="7" cy="11" r="1.5"/></g></svg>
  <svg class="a" style="left:290px;top:65px" width="13" height="9" viewBox="0 0 13 9"><path d="M0.5 4.5C3 0.5 10 0.5 12.5 4.5C10 8.5 3 8.5 0.5 4.5Z" fill="#eee"/><circle cx="6.5" cy="4.5" r="2.3" fill="#282828"/><circle cx="6.5" cy="4.5" r="1" fill="#eee"/></svg>
  <svg class="a" style="left:308px;top:64px" width="13" height="11" viewBox="0 0 13 11"><path d="M0.5 2.5H3.5L4.5 0.8H8.5L9.5 2.5H12.5V10.5H0.5Z" fill="#eee"/><circle cx="6.5" cy="6.2" r="2.9" fill="#282828"/><circle cx="6.5" cy="6.2" r="1.6" fill="#eee"/></svg>
</div></div>
<div id="props" class="a">
<div class="a" style="left:0;top:0;width:331px;height:22.5px;background:#2e2e2e"></div>
<div class="b dk" style="left:8px;top:3.5px;width:26px"></div>
<svg class="a" style="left:11px;top:5.5px" width="13" height="12" viewBox="0 0 13 12"><rect x="0.5" y="0.8" width="11" height="4.4" rx="2.2" fill="#ddd"/><rect x="0.5" y="6.8" width="11" height="4.4" rx="2.2" fill="#ddd"/><circle cx="9" cy="3" r="1.3" fill="#282828"/><circle cx="3" cy="9" r="1.3" fill="#282828"/></svg>
<svg class="a" style="left:25.5px;top:10px" width="7" height="5" viewBox="0 0 7 5"><path d="M0.7 0.8L3.5 3.8L6.3 0.8" fill="none" stroke="#ddd" stroke-width="1.1"/></svg>
<div class="b" style="left:116.5px;top:3.5px;width:100px;background:#1d1d1d;border:1px solid #3a3a3a"></div>
<svg class="a" style="left:120px;top:6px" width="12" height="12" viewBox="0 0 12 12"><circle cx="7.2" cy="4.3" r="3.2" fill="none" stroke="#ddd" stroke-width="1.1"/><path d="M5 6.7L1 10.8" stroke="#ddd" stroke-width="1.3"/></svg>
<div class="b dk" style="left:307.5px;top:3.5px;width:17px"></div>
<svg class="a" style="left:312.5px;top:10px" width="7" height="5" viewBox="0 0 7 5"><path d="M0.7 0.8L3.5 3.8L6.3 0.8" fill="none" stroke="#ddd" stroke-width="1.1"/></svg>
<div class="a" style="left:0;top:22.5px;width:24px;height:640px;background:#1d1d1d"></div>
<div class="a" style="left:1px;top:375px;width:23px;height:24px;background:#303030;border-radius:4px 0 0 4px"></div>
<svg class="a" style="left:6.0px;top:34.0px" width="13" height="13" viewBox="0 0 13 13"><path d="M3 0.8V6.5M1.6 7H4.4V10.5Q3 12.5 1.6 10.5ZM10 12.2V6.5M8 1C7.5 4 8.5 6 10 6.2C11.5 6 12.5 4 12 1L10.8 3.2H9.2Z" fill="#ddd" stroke="#ddd" stroke-width="0.9"/></svg>
<svg class="a" style="left:6.0px;top:66.5px" width="13" height="13" viewBox="0 0 13 13"><path d="M0.8 3.8H9.8V11.5H0.8ZM2 3.5L3.5 1.5H7L8.5 3.5M10 6L12.3 4.8V10.4L10 9.2" fill="none" stroke="#ddd" stroke-width="1.1"/></svg>
<svg class="a" style="left:6.0px;top:92.0px" width="13" height="13" viewBox="0 0 13 13"><path d="M0.8 1H12.2V4.5H0.8Z" fill="#ddd"/><path d="M2.5 5.5V12H10.5V5.5M4.5 12L6.5 8L8.5 12" fill="none" stroke="#ddd" stroke-width="1.1"/></svg>
<svg class="a" style="left:6.0px;top:117.0px" width="13" height="13" viewBox="0 0 13 13"><path d="M0.8 4V12H9M2.6 2.5V10.2H10.5" fill="none" stroke="#bbb" stroke-width="0.9"/><rect x="4.5" y="0.8" width="8" height="7.6" fill="#ddd"/><path d="M5.5 7.5L8 3.5L10 6L11 5L11.8 7.5Z" fill="#333"/></svg>
<svg class="a" style="left:6.0px;top:141.5px" width="13" height="13" viewBox="0 0 13 13"><path d="M4 1.5L7.5 9H0.5Z" fill="#ddd"/><circle cx="10" cy="3.5" r="1.8" fill="#ddd"/><circle cx="9.5" cy="9.5" r="2.8" fill="none" stroke="#ddd" stroke-width="1.1"/></svg>
<svg class="a" style="left:6.0px;top:167.0px" width="13" height="13" viewBox="0 0 13 13"><circle cx="6.5" cy="6.5" r="5.3" fill="none" stroke="#a8444f" stroke-width="1.3"/><path d="M3.5 4C5 2.5 7 3.5 6.5 5.5C6 7 8 7.5 9.5 6.5C9 9.5 6 10.5 4 9C3 8 2.8 5.5 3.5 4Z" fill="#a8444f"/></svg>
<svg class="a" style="left:6.0px;top:200.0px" width="13" height="13" viewBox="0 0 13 13"><path d="M0.8 1.5H12.2V4.5H0.8ZM1.8 4.5V11.8H11.2V4.5M5 7H8" fill="none" stroke="#eee" stroke-width="1.2"/></svg>
<svg class="a" style="left:6.0px;top:230.5px" width="13" height="13" viewBox="0 0 13 13"><rect x="3.2" y="3.2" width="6.6" height="6.6" fill="#e8a060"/><path d="M0.6 3V0.6H3M10 0.6H12.4V3M12.4 10V12.4H10M3 12.4H0.6V10" fill="none" stroke="#e8a060" stroke-width="1"/></svg>
<svg class="a" style="left:6.0px;top:256.0px" width="13" height="13" viewBox="0 0 13 13"><path d="M1.5 11.5L6.5 6.5M6 5C5.5 2.5 8 0.5 10.5 1.5L8.5 3.5L9.5 5.5L11.5 4C12.5 6.5 10.5 8.5 8 7.5" fill="none" stroke="#5a9ae8" stroke-width="2" stroke-linecap="round"/></svg>
<svg class="a" style="left:6.0px;top:281.5px" width="13" height="13" viewBox="0 0 13 13"><path d="M2.5 2.5V11M2.5 2.5H11M2.5 2.5L10.5 9" fill="none" stroke="#5a9ae8" stroke-width="1"/><circle cx="2.5" cy="2.5" r="1.6" fill="#5a9ae8"/><circle cx="11" cy="2.5" r="1.4" fill="#5a9ae8"/><circle cx="2.5" cy="11" r="1.4" fill="#5a9ae8"/><circle cx="10.5" cy="9.5" r="1.4" fill="#5a9ae8"/></svg>
<svg class="a" style="left:6.0px;top:306.0px" width="13" height="13" viewBox="0 0 13 13"><path d="M10.5 3.5A5 5 0 1 0 11.5 7.5" fill="none" stroke="#5a9ae8" stroke-width="1.3"/><circle cx="6.5" cy="6.8" r="2.2" fill="#5a9ae8"/><circle cx="11.3" cy="2.2" r="1.1" fill="#5a9ae8"/></svg>
<svg class="a" style="left:6.0px;top:331.0px" width="13" height="13" viewBox="0 0 13 13"><path d="M2 9C0.5 6 3 2.5 7 2L11.5 1L11 5.5C10 9.5 6.5 12 3.5 10.5" fill="none" stroke="#5a9ae8" stroke-width="1.3"/><circle cx="6.5" cy="6.5" r="2.3" fill="none" stroke="#5a9ae8" stroke-width="1.3"/></svg>
<svg class="a" style="left:6.0px;top:356.0px" width="13" height="13" viewBox="0 0 13 13"><path d="M2.5 2.5H10.5L6.5 11Z" fill="none" stroke="#3ec47a" stroke-width="1.1"/><g fill="#1d1d1d" stroke="#3ec47a" stroke-width="1"><circle cx="2.5" cy="2.5" r="1.5"/><circle cx="10.5" cy="2.5" r="1.5"/><circle cx="6.5" cy="11" r="1.5"/></g></svg>
<svg class="a" style="left:6.0px;top:380.5px" width="13" height="13" viewBox="0 0 13 13"><circle cx="6.5" cy="6.5" r="5.6" fill="#e0606a"/><path d="M6.5 6.5V1.5A5 5 0 0 0 1.5 6.5ZM6.5 6.5H11.5A5 5 0 0 1 6.5 11.5Z" fill="#303030" opacity="0.85"/></svg>
<svg class="a" style="left:6.0px;top:413.0px" width="13" height="13" viewBox="0 0 13 13"><path d="M0.5 0.5H12.5V12.5H0.5Z" fill="#d0505a"/><path d="M0.5 0.5H3.5V3.5H0.5ZM6.5 0.5H9.5V3.5H6.5ZM3.5 3.5H6.5V6.5H3.5ZM9.5 3.5H12.5V6.5H9.5ZM0.5 6.5H3.5V9.5H0.5ZM6.5 6.5H9.5V9.5H6.5ZM3.5 9.5H6.5V12.5H3.5ZM9.5 9.5H12.5V12.5H9.5Z" fill="#70232a"/></svg>
<svg class="a" style="left:33.5px;top:32px" width="13" height="12" viewBox="0 0 13 12"><rect x="3" y="2.5" width="7" height="7" fill="#ddd"/><path d="M0.6 3V0.6H3M10 0.6H12.4V3M12.4 9V11.4H10M3 11.4H0.6V9" fill="none" stroke="#ccc" stroke-width="1"/></svg>
<div class="t" style="left:54px;top:31.5px;color:#e6e6e6">Old Paper Scroll</div>
<svg class="a" style="left:141px;top:34px" width="6" height="9" viewBox="0 0 6 9"><path d="M0.8 0.8L5 4.5L0.8 8.2" fill="none" stroke="#aaa" stroke-width="1.1"/></svg>
<svg class="a" style="left:155.5px;top:31.5px" width="13" height="13" viewBox="0 0 13 13"><circle cx="6.5" cy="6.5" r="5.5" fill="none" stroke="#e6e6e6" stroke-width="1.1"/><path d="M6.5 6.5V1A5.5 5.5 0 0 0 1 6.5ZM6.5 6.5H12A5.5 5.5 0 0 1 6.5 12Z" fill="#e6e6e6"/></svg>
<div class="t" style="left:176px;top:31.5px;color:#e6e6e6">Old Paper Scroll</div>
<svg class="a" style="left:310px;top:31px" width="13" height="13" viewBox="0 0 13 13"><path d="M7.5 1L12 5.5L10.5 6L8.5 8.5L8 11L2 5L4.5 4.5L7 2.5ZM4.5 8.5L1 12" fill="none" stroke="#777" stroke-width="1.1"/></svg>
<div class="a" style="left:32px;top:62px;width:267.5px;height:69px;background:#282828;border:1px solid #242424;box-sizing:border-box;border-radius:3px"></div>
<div class="a" style="left:36px;top:66px;width:259.5px;height:16px;background:#484a4f;border-radius:2px"></div>
<svg class="a" style="left:38.5px;top:68px" width="12" height="12" viewBox="0 0 12 12"><defs><radialGradient id="gMs" cx="0.4" cy="0.4" r="0.7"><stop offset="0" stop-color="#f0c090"/><stop offset="0.6" stop-color="#b07a48"/><stop offset="1" stop-color="#4a3020"/></radialGradient></defs><ellipse cx="6" cy="6" rx="5" ry="5.6" fill="url(#gMs)"/></svg>
<div class="t" style="left:58px;top:67.5px;color:#fff">Old Paper Scroll</div>
<svg class="a" style="left:41px;top:120px" width="6" height="7" viewBox="0 0 6 7"><path d="M0.5 0.5L5.5 3.5L0.5 6.5Z" fill="#bbb"/></svg>
<svg class="a" style="left:168.5px;top:121px" width="11" height="5" viewBox="0 0 11 5"><g fill="#777"><rect x="0" y="0" width="1.4" height="1.4"/><rect x="3" y="0" width="1.4" height="1.4"/><rect x="6" y="0" width="1.4" height="1.4"/><rect x="9" y="0" width="1.4" height="1.4"/><rect x="0" y="3" width="1.4" height="1.4"/><rect x="3" y="3" width="1.4" height="1.4"/><rect x="6" y="3" width="1.4" height="1.4"/><rect x="9" y="3" width="1.4" height="1.4"/></g></svg>
<div class="a" style="left:307.5px;top:62.5px;width:17px;height:34px;background:#545454;border:1px solid #3d3d3d;box-sizing:border-box;border-radius:3px"></div>
<div class="a" style="left:307.5px;top:79px;width:17px;height:1px;background:#3d3d3d"></div>
<svg class="a" style="left:311.5px;top:66px" width="9" height="9" viewBox="0 0 9 9"><path d="M4.5 0.5V8.5M0.5 4.5H8.5" stroke="#e6e6e6" stroke-width="1.1"/></svg>
<svg class="a" style="left:311.5px;top:83px" width="9" height="9" viewBox="0 0 9 9"><path d="M0.5 4.5H8.5" stroke="#e6e6e6" stroke-width="1.1"/></svg>
<div class="b dk" style="left:307.5px;top:103px;width:17px"></div>
<svg class="a" style="left:312.5px;top:109.5px" width="7" height="5" viewBox="0 0 7 5"><path d="M0.7 0.8L3.5 3.8L6.3 0.8" fill="none" stroke="#ddd" stroke-width="1.1"/></svg>
<div class="a" style="left:32px;top:137px;width:27px;height:16px;background:#282828;border:1px solid #3a3a3a;box-sizing:border-box;border-radius:3px 0 0 3px"></div>
<svg class="a" style="left:34.5px;top:138.5px" width="13" height="13" viewBox="0 0 13 13"><circle cx="6.5" cy="6.5" r="5.5" fill="none" stroke="#e6e6e6" stroke-width="1.1"/><path d="M6.5 6.5V1A5.5 5.5 0 0 0 1 6.5ZM6.5 6.5H12A5.5 5.5 0 0 1 6.5 12Z" fill="#e6e6e6"/></svg>
<svg class="a" style="left:49.5px;top:143.5px" width="7" height="5" viewBox="0 0 7 5"><path d="M0.7 0.8L3.5 3.8L6.3 0.8" fill="none" stroke="#ddd" stroke-width="1.1"/></svg>
<div class="a" style="left:59px;top:137px;width:177px;height:16px;background:#1d1d1d;border:1px solid #333;box-sizing:border-box"></div>
<div class="t" style="left:65px;top:139px;color:#e6e6e6">Old Paper Scroll</div>
<div class="a" style="left:235.5px;top:137px;width:54.5px;height:16px;background:#545454;border:1px solid #3d3d3d;box-sizing:border-box;border-radius:0 3px 3px 0"></div>
<div class="a" style="left:253px;top:137px;width:1px;height:16px;background:#3d3d3d"></div><div class="a" style="left:271.5px;top:137px;width:1px;height:16px;background:#3d3d3d"></div>
<svg class="a" style="left:239px;top:139.5px" width="11" height="11" viewBox="0 0 11 11"><path d="M5.5 0.8C7 1.8 8.5 2 10 2V6C9.5 8.5 7.5 10 5.5 10.5C3.5 10 1.5 8.5 1 6V2C2.5 2 4 1.8 5.5 0.8Z" fill="none" stroke="#888" stroke-width="1.1"/></svg>
<svg class="a" style="left:256.5px;top:139px" width="12" height="12" viewBox="0 0 12 13"><path d="M3.5 3V0.8H8.5L11 3.3V9.5H8.5M8.5 0.8V3.3H11M0.8 3.2H8.3V12H0.8Z" fill="none" stroke="#ddd" stroke-width="1.1"/></svg>
<svg class="a" style="left:276.5px;top:141px" width="8" height="8" viewBox="0 0 8 8"><path d="M0.5 0.5L7.5 7.5M7.5 0.5L0.5 7.5" stroke="#ddd" stroke-width="1.1"/></svg>
<div class="b dk" style="left:299.5px;top:137px;width:25px"></div>
<svg class="a" style="left:301.5px;top:139px" width="13" height="12" viewBox="0 0 13 12"><path d="M2.5 2.5H10.5L6.5 10Z" fill="none" stroke="#ddd" stroke-width="1"/><g fill="#282828" stroke="#ddd" stroke-width="1"><circle cx="2.5" cy="2.5" r="1.5"/><circle cx="10.5" cy="2.5" r="1.5"/><circle cx="6.5" cy="10" r="1.5"/></g></svg>
<svg class="a" style="left:315.5px;top:143.5px" width="7" height="5" viewBox="0 0 7 5"><path d="M0.7 0.8L3.5 3.8L6.3 0.8" fill="none" stroke="#ddd" stroke-width="1.1"/></svg>
<div class="a" style="left:31px;top:162.5px;width:293.5px;height:21.5px;background:#3d3d3d;border-radius:4px"></div>
<svg class="a" style="left:39.5px;top:169px" width="6" height="9" viewBox="0 0 6 9"><path d="M0.8 0.8L4.8 4.5L0.8 8.2" fill="none" stroke="#aaa" stroke-width="1.1"/></svg>
<div class="t" style="left:50px;top:167.5px;color:#e6e6e6">Предпросмотр</div>
<svg class="a" style="left:307.5px;top:170.5px" width="11" height="5" viewBox="0 0 11 5"><g fill="#6a6a6a"><rect x="0" y="0" width="1.4" height="1.4"/><rect x="3" y="0" width="1.4" height="1.4"/><rect x="6" y="0" width="1.4" height="1.4"/><rect x="9" y="0" width="1.4" height="1.4"/><rect x="0" y="3" width="1.4" height="1.4"/><rect x="3" y="3" width="1.4" height="1.4"/><rect x="6" y="3" width="1.4" height="1.4"/><rect x="9" y="3" width="1.4" height="1.4"/></g></svg>
<div class="a" style="left:31px;top:187px;width:293.5px;height:480px;background:#3d3d3d;border-radius:4px"></div>
<svg class="a" style="left:38px;top:193.5px" width="9" height="6" viewBox="0 0 9 6"><path d="M0.8 0.8L4.5 4.8L8.2 0.8" fill="none" stroke="#aaa" stroke-width="1.1"/></svg>
<div class="t" style="left:50px;top:190.5px;color:#e6e6e6">Поверхность</div>
<svg class="a" style="left:307.5px;top:193.5px" width="11" height="5" viewBox="0 0 11 5"><g fill="#6a6a6a"><rect x="0" y="0" width="1.4" height="1.4"/><rect x="3" y="0" width="1.4" height="1.4"/><rect x="6" y="0" width="1.4" height="1.4"/><rect x="9" y="0" width="1.4" height="1.4"/><rect x="0" y="3" width="1.4" height="1.4"/><rect x="3" y="3" width="1.4" height="1.4"/><rect x="6" y="3" width="1.4" height="1.4"/><rect x="9" y="3" width="1.4" height="1.4"/></g></svg>
<div class="t" style="right:192.5px;left:auto;top:217px;color:#e6e6e6;text-align:right">Поверхность</div>
<div class="a" style="left:147.5px;top:215px;width:150.5px;height:16px;background:#282828;border-radius:3px"></div><div class="a" style="left:151.79999999999995px;top:220px;width:6px;height:6px;border-radius:3.5px;background:#63c763;box-shadow:0 0 0 0.8px #1a1a1a"></div><div class="t" style="left:166px;top:217px;color:#e6e6e6">Принципиальный BSDF</div>
<div class="a" style="left:147.5px;top:246px;width:150.5px;height:16px;background:#282828;border-radius:3px;border:1px solid #333;box-sizing:border-box"></div><div class="t" style="left:153px;top:248px;color:#e6e6e6">GGX</div><svg class="a" style="left:289.5px;top:251.6px" width="7" height="5" viewBox="0 0 7 5"><path d="M0.7 0.8L3.5 3.8L6.3 0.8" fill="none" stroke="#ddd" stroke-width="1.1"/></svg><div class="a" style="left:306px;top:252px;width:4px;height:4px;border-radius:2px;background:#d0d0d0"></div>
<div class="a" style="left:147.5px;top:268px;width:150.5px;height:16px;background:#282828;border-radius:3px;border:1px solid #333;box-sizing:border-box"></div><div class="t" style="left:153px;top:270px;color:#e6e6e6">Случайный обход</div><svg class="a" style="left:289.5px;top:273.6px" width="7" height="5" viewBox="0 0 7 5"><path d="M0.7 0.8L3.5 3.8L6.3 0.8" fill="none" stroke="#ddd" stroke-width="1.1"/></svg><div class="a" style="left:306px;top:274px;width:4px;height:4px;border-radius:2px;background:#d0d0d0"></div>
<svg class="a" style="left:44px;top:294.5px" width="6" height="7" viewBox="0 0 6 7"><path d="M0.5 0.5L5.5 3.5L0.5 6.5Z" fill="#ddd"/></svg>
<div class="t" style="right:192.5px;left:auto;top:292px;color:#e6e6e6;text-align:right">Основной цвет</div>
<div class="a" style="left:147.5px;top:290px;width:150.5px;height:16px;background:#282828;border-radius:3px"></div><div class="a" style="left:151.79999999999995px;top:295px;width:6px;height:6px;border-radius:3.5px;background:#d8c95a;box-shadow:0 0 0 0.8px #1a1a1a"></div><div class="t" style="left:166px;top:292px;color:#e6e6e6">Основной цвет</div>
<div class="t" style="right:192.5px;left:auto;top:314px;color:#e6e6e6;text-align:right">Подпов. рассеива…</div>
<div class="a" style="left:147.5px;top:312px;width:16px;height:16px;background:#282828;border-radius:3px 0 0 3px"></div><div class="a" style="left:151.79999999999995px;top:317px;width:6px;height:6px;border-radius:3.5px;background:#a1a1a1;box-shadow:0 0 0 0.8px #1a1a1a"></div><div class="a" style="left:163.5px;top:312px;width:134.5px;height:16px;background:#545454;border-radius:0 3px 3px 0;overflow:hidden"><div class="t" style="left:0;width:134.5px;top:2px;text-align:center;color:#e6e6e6">0.000</div></div><div class="a" style="left:306px;top:318px;width:4px;height:4px;border-radius:2px;background:#d0d0d0"></div>
<div class="t" style="right:192.5px;left:auto;top:336px;color:#e6e6e6;text-align:right">Радиус п…сеивания</div>
<div class="a" style="left:147.5px;top:334px;width:16px;height:16px;background:#282828;border-radius:3px"></div><div class="a" style="left:151.79999999999995px;top:339px;width:6px;height:6px;border-radius:3.5px;background:#6363c7;box-shadow:0 0 0 0.8px #1a1a1a"></div>
<div class="a" style="left:170px;top:334px;width:128px;height:17px;background:#545454;border-radius:3px 3px 0 0;border-bottom:1px solid #3d3d3d;box-sizing:border-box"><div class="t" style="left:0;width:128px;top:2px;text-align:center;color:#e6e6e6">1.000</div></div><div class="a" style="left:306px;top:340px;width:4px;height:4px;border-radius:2px;background:#d0d0d0"></div>
<div class="a" style="left:170px;top:352px;width:128px;height:17px;background:#545454;border-radius:0;border-bottom:1px solid #3d3d3d;box-sizing:border-box"><div class="t" style="left:0;width:128px;top:2px;text-align:center;color:#e6e6e6">0.200</div></div><div class="a" style="left:306px;top:358px;width:4px;height:4px;border-radius:2px;background:#d0d0d0"></div>
<div class="a" style="left:170px;top:370px;width:128px;height:16px;background:#545454;border-radius:0 0 3px 3px;border-bottom:0;box-sizing:border-box"><div class="t" style="left:0;width:128px;top:2px;text-align:center;color:#e6e6e6">0.100</div></div><div class="a" style="left:306px;top:376px;width:4px;height:4px;border-radius:2px;background:#d0d0d0"></div>
<div class="t" style="right:192.5px;left:auto;top:394px;color:#e6e6e6;text-align:right">Подпов. цвет</div>
<div class="a" style="left:147.5px;top:392px;width:16px;height:16px;background:#282828;border-radius:3px 0 0 3px"></div><div class="a" style="left:151.79999999999995px;top:397px;width:6px;height:6px;border-radius:3.5px;background:#d8c95a;box-shadow:0 0 0 0.8px #1a1a1a"></div>
<div class="a" style="left:163.5px;top:392px;width:134.5px;height:16px;background:#e7e7e7;border-radius:0 3px 3px 0"></div><div class="a" style="left:306px;top:398px;width:4px;height:4px;border-radius:2px;background:#d0d0d0"></div>
<div class="t" style="right:192.5px;left:auto;top:416px;color:#e6e6e6;text-align:right">Subsurface IOR</div>
<div class="a" style="left:147.5px;top:414px;width:16px;height:16px;background:#282828;border-radius:3px 0 0 3px"></div><div class="a" style="left:151.79999999999995px;top:419px;width:6px;height:6px;border-radius:3.5px;background:#a1a1a1;box-shadow:0 0 0 0.8px #1a1a1a"></div><div class="a" style="left:163.5px;top:414px;width:134.5px;height:16px;background:#545454;border-radius:0 3px 3px 0;overflow:hidden"><div class="a" style="left:0;top:0;width:18px;height:16px;background:#4772b3"></div><div class="t" style="left:0;width:134.5px;top:2px;text-align:center;color:#e6e6e6">1.400</div></div><div class="a" style="left:306px;top:420px;width:4px;height:4px;border-radius:2px;background:#d0d0d0"></div>
<div class="t" style="right:192.5px;left:auto;top:438px;color:#e6e6e6;text-align:right">Subsurface Anisotr…</div>
<div class="a" style="left:147.5px;top:436px;width:16px;height:16px;background:#282828;border-radius:3px 0 0 3px"></div><div class="a" style="left:151.79999999999995px;top:441px;width:6px;height:6px;border-radius:3.5px;background:#a1a1a1;box-shadow:0 0 0 0.8px #1a1a1a"></div><div class="a" style="left:163.5px;top:436px;width:134.5px;height:16px;background:#545454;border-radius:0 3px 3px 0;overflow:hidden"><div class="t" style="left:0;width:134.5px;top:2px;text-align:center;color:#e6e6e6">0.000</div></div><div class="a" style="left:306px;top:442px;width:4px;height:4px;border-radius:2px;background:#d0d0d0"></div>
<svg class="a" style="left:44px;top:462.5px" width="6" height="7" viewBox="0 0 6 7"><path d="M0.5 0.5L5.5 3.5L0.5 6.5Z" fill="#ddd"/></svg>
<div class="t" style="right:192.5px;left:auto;top:460px;color:#e6e6e6;text-align:right">Металличность</div>
<div class="a" style="left:147.5px;top:458px;width:150.5px;height:16px;background:#282828;border-radius:3px"></div><div class="a" style="left:151.79999999999995px;top:463px;width:6px;height:6px;border-radius:3.5px;background:#a1a1a1;box-shadow:0 0 0 0.8px #1a1a1a"></div><div class="t" style="left:166px;top:460px;color:#e6e6e6">Металличность</div>
<div class="t" style="right:192.5px;left:auto;top:482px;color:#e6e6e6;text-align:right">Блик</div>
<div class="a" style="left:147.5px;top:480px;width:16px;height:16px;background:#282828;border-radius:3px 0 0 3px"></div><div class="a" style="left:151.79999999999995px;top:485px;width:6px;height:6px;border-radius:3.5px;background:#a1a1a1;box-shadow:0 0 0 0.8px #1a1a1a"></div><div class="a" style="left:163.5px;top:480px;width:134.5px;height:16px;background:#545454;border-radius:0 3px 3px 0;overflow:hidden"><div class="a" style="left:0;top:0;width:66.5px;height:16px;background:#4772b3"></div><div class="t" style="left:0;width:134.5px;top:2px;text-align:center;color:#e6e6e6">0.500</div></div><div class="a" style="left:306px;top:486px;width:4px;height:4px;border-radius:2px;background:#d0d0d0"></div>
<div class="t" style="right:192.5px;left:auto;top:504px;color:#e6e6e6;text-align:right">Цветной блик</div>
<div class="a" style="left:147.5px;top:502px;width:16px;height:16px;background:#282828;border-radius:3px 0 0 3px"></div><div class="a" style="left:151.79999999999995px;top:507px;width:6px;height:6px;border-radius:3.5px;background:#a1a1a1;box-shadow:0 0 0 0.8px #1a1a1a"></div><div class="a" style="left:163.5px;top:502px;width:134.5px;height:16px;background:#545454;border-radius:0 3px 3px 0;overflow:hidden"><div class="t" style="left:0;width:134.5px;top:2px;text-align:center;color:#e6e6e6">0.000</div></div><div class="a" style="left:306px;top:508px;width:4px;height:4px;border-radius:2px;background:#d0d0d0"></div>
<svg class="a" style="left:44px;top:528.5px" width="6" height="7" viewBox="0 0 6 7"><path d="M0.5 0.5L5.5 3.5L0.5 6.5Z" fill="#ddd"/></svg>
<div class="t" style="right:192.5px;left:auto;top:526px;color:#e6e6e6;text-align:right">Шероховатость</div>
<div class="a" style="left:147.5px;top:524px;width:150.5px;height:16px;background:#282828;border-radius:3px"></div><div class="a" style="left:151.79999999999995px;top:529px;width:6px;height:6px;border-radius:3.5px;background:#a1a1a1;box-shadow:0 0 0 0.8px #1a1a1a"></div><div class="t" style="left:166px;top:526px;color:#e6e6e6">Шероховатость</div>
<div class="t" style="right:192.5px;left:auto;top:548px;color:#e6e6e6;text-align:right">Анизотропность</div>
<div class="a" style="left:147.5px;top:546px;width:16px;height:16px;background:#282828;border-radius:3px 0 0 3px"></div><div class="a" style="left:151.79999999999995px;top:551px;width:6px;height:6px;border-radius:3.5px;background:#a1a1a1;box-shadow:0 0 0 0.8px #1a1a1a"></div><div class="a" style="left:163.5px;top:546px;width:134.5px;height:16px;background:#545454;border-radius:0 3px 3px 0;overflow:hidden"><div class="t" style="left:0;width:134.5px;top:2px;text-align:center;color:#e6e6e6">0.000</div></div><div class="a" style="left:306px;top:552px;width:4px;height:4px;border-radius:2px;background:#d0d0d0"></div>
<div class="t" style="right:192.5px;left:auto;top:570px;color:#e6e6e6;text-align:right">Поворот анизотро…</div>
<div class="a" style="left:147.5px;top:568px;width:16px;height:16px;background:#282828;border-radius:3px 0 0 3px"></div><div class="a" style="left:151.79999999999995px;top:573px;width:6px;height:6px;border-radius:3.5px;background:#a1a1a1;box-shadow:0 0 0 0.8px #1a1a1a"></div><div class="a" style="left:163.5px;top:568px;width:134.5px;height:16px;background:#545454;border-radius:0 3px 3px 0;overflow:hidden"><div class="t" style="left:0;width:134.5px;top:2px;text-align:center;color:#e6e6e6">0.000</div></div><div class="a" style="left:306px;top:574px;width:4px;height:4px;border-radius:2px;background:#d0d0d0"></div>
<div class="t" style="right:192.5px;left:auto;top:592px;color:#e6e6e6;text-align:right">Блеск ткани</div>
<div class="a" style="left:147.5px;top:590px;width:16px;height:16px;background:#282828;border-radius:3px 0 0 3px"></div><div class="a" style="left:151.79999999999995px;top:595px;width:6px;height:6px;border-radius:3.5px;background:#a1a1a1;box-shadow:0 0 0 0.8px #1a1a1a"></div><div class="a" style="left:163.5px;top:590px;width:134.5px;height:16px;background:#545454;border-radius:0 3px 3px 0;overflow:hidden"><div class="t" style="left:0;width:134.5px;top:2px;text-align:center;color:#e6e6e6">0.000</div></div><div class="a" style="left:306px;top:596px;width:4px;height:4px;border-radius:2px;background:#d0d0d0"></div>
<div class="t" style="right:192.5px;left:auto;top:614px;color:#e6e6e6;text-align:right">Оттенок блеска тк…</div>
<div class="a" style="left:147.5px;top:612px;width:16px;height:16px;background:#282828;border-radius:3px 0 0 3px"></div><div class="a" style="left:151.79999999999995px;top:617px;width:6px;height:6px;border-radius:3.5px;background:#a1a1a1;box-shadow:0 0 0 0.8px #1a1a1a"></div><div class="a" style="left:163.5px;top:612px;width:134.5px;height:16px;background:#545454;border-radius:0 3px 3px 0;overflow:hidden"><div class="a" style="left:0;top:0;width:66.5px;height:16px;background:#4772b3"></div><div class="t" style="left:0;width:134.5px;top:2px;text-align:center;color:#e6e6e6">0.500</div></div><div class="a" style="left:306px;top:618px;width:4px;height:4px;border-radius:2px;background:#d0d0d0"></div>
<div class="t" style="right:192.5px;left:auto;top:636px;color:#e6e6e6;text-align:right">Лак</div>
<div class="a" style="left:147.5px;top:634px;width:16px;height:16px;background:#282828;border-radius:3px 0 0 3px"></div><div class="a" style="left:151.79999999999995px;top:639px;width:6px;height:6px;border-radius:3.5px;background:#a1a1a1;box-shadow:0 0 0 0.8px #1a1a1a"></div><div class="a" style="left:163.5px;top:634px;width:134.5px;height:16px;background:#545454;border-radius:0 3px 3px 0;overflow:hidden"><div class="t" style="left:0;width:134.5px;top:2px;text-align:center;color:#e6e6e6">0.000</div></div><div class="a" style="left:306px;top:640px;width:4px;height:4px;border-radius:2px;background:#d0d0d0"></div>
<div class="t" style="right:192.5px;left:auto;top:658px;color:#e6e6e6;text-align:right">Шероховатость лака</div>
<div class="a" style="left:147.5px;top:656px;width:16px;height:16px;background:#282828;border-radius:3px 0 0 3px"></div><div class="a" style="left:151.79999999999995px;top:661px;width:6px;height:6px;border-radius:3.5px;background:#a1a1a1;box-shadow:0 0 0 0.8px #1a1a1a"></div><div class="a" style="left:163.5px;top:656px;width:134.5px;height:16px;background:#545454;border-radius:0 3px 3px 0;overflow:hidden"><div class="a" style="left:0;top:0;width:4px;height:16px;background:#4772b3"></div><div class="t" style="left:0;width:134.5px;top:2px;text-align:center;color:#e6e6e6">0.030</div></div><div class="a" style="left:306px;top:662px;width:4px;height:4px;border-radius:2px;background:#d0d0d0"></div>
<div class="a" style="left:326px;top:32px;width:3.5px;height:324px;background:#4b4b4b;border-radius:2px"></div>
</div>
<div id="status" class="a">
  <svg class="a" style="left:10px;top:1px" width="11" height="14" viewBox="0 0 11 14"><rect x="1" y="1" width="9" height="12" rx="3.5" fill="none" stroke="#bbb" stroke-width="1.1"/><path d="M1 6V4.5Q1 1 5.5 1V6Z" fill="#ddd"/></svg><div class="t" style="left:30px;top:2px;color:#bdbdbd">Выделить</div>
  <svg class="a" style="left:220px;top:1px" width="11" height="14" viewBox="0 0 11 14"><rect x="1" y="1" width="9" height="12" rx="3.5" fill="none" stroke="#bbb" stroke-width="1.1"/><rect x="4.3" y="2.5" width="2.4" height="4.5" rx="1" fill="#ddd"/></svg><div class="t" style="left:240px;top:2px;color:#bdbdbd">Повернуть вид</div>
  <svg class="a" style="left:430px;top:1px" width="11" height="14" viewBox="0 0 11 14"><rect x="1" y="1" width="9" height="12" rx="3.5" fill="none" stroke="#bbb" stroke-width="1.1"/><path d="M10 6V4.5Q10 1 5.5 1V6Z" fill="#ddd"/></svg><div class="t" style="left:450px;top:2px;color:#bdbdbd">Контекстное меню объектов</div>
  <div class="t" style="right:6.5px;left:auto;top:2px;color:#9a9a9a">3.5.1</div>
  <div class="a" style="left:393px;top:17px;width:47px;height:1px;background:#4a4a4a"></div>
</div>
</body>
</html>
